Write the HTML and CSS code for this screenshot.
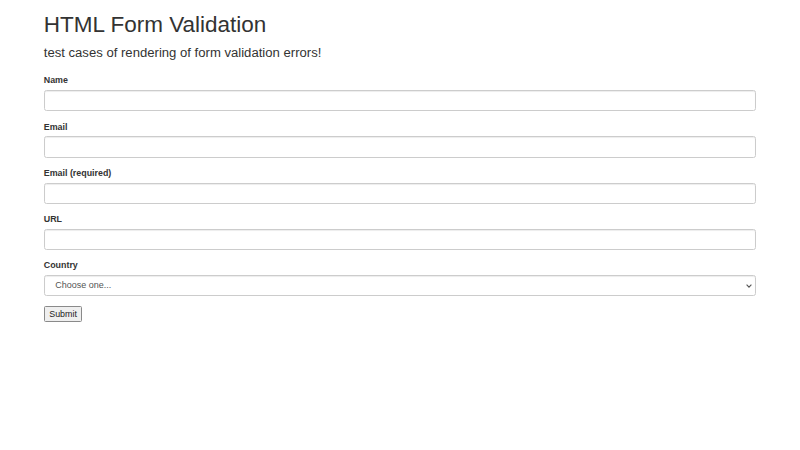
FILE: index.html
```html
<!DOCTYPE html>
<html lang="en">
<head>
<meta charset="utf-8">
<title>HTML Form Validation</title>
<link rel="stylesheet" href="styles.css">
</head>
<body>
<div class="container">
  <h1 class="title">HTML Form Validation</h1>
  <p class="lead">test cases of rendering of form validation errors!</p>
  <form class="form">
    <div class="form-group">
      <label class="label" for="name">Name</label>
      <input class="form-control" type="text" id="name">
    </div>
    <div class="form-group">
      <label class="label" for="email">Email</label>
      <input class="form-control" type="email" id="email">
    </div>
    <div class="form-group">
      <label class="label" for="email2">Email (required)</label>
      <input class="form-control" type="email" id="email2">
    </div>
    <div class="form-group">
      <label class="label" for="url">URL</label>
      <input class="form-control" type="url" id="url">
    </div>
    <div class="form-group">
      <label class="label" for="country">Country</label>
      <select class="form-control select" id="country">
        <option>Choose one...</option>
      </select>
    </div>
    <button class="submit" type="button">Submit</button>
  </form>
</div>
</body>
</html>
```
FILE: styles.css
```css
html, body {
  margin: 0;
  padding: 0;
  background: #fff;
}
body {
  font-family: "Liberation Sans", Arial, Helvetica, sans-serif;
  font-size: 8.75px;
  line-height: 12.5px;
  color: #333;
}
.container {
  width: 712.5px;
  margin: 0 auto;
}
.title {
  font-size: 22.5px;
  line-height: 24.75px;
  font-weight: 500;
  margin: 12.5px 0 6.25px;
  color: #333;
}
.lead {
  font-size: 13.125px;
  line-height: 18.375px;
  font-weight: 300;
  margin: 0 0 12.5px;
}
.form {
  margin: 0;
}
.form-group {
  margin-bottom: 9.375px;
}
.label {
  display: inline-block;
  font-weight: bold;
  font-size: 8.9px;
  margin-bottom: 3.125px;
}
.form-control {
  display: block;
  box-sizing: border-box;
  width: 100%;
  height: 21.25px;
  padding: 3.75px 7.5px;
  font-family: inherit;
  font-size: 8.75px;
  line-height: 12.5px;
  color: #555;
  background: #fff;
  border: 1px solid #ccc;
  border-radius: 2.5px;
  box-shadow: inset 0 1px 1px rgba(0, 0, 0, 0.075);
  margin: 0;
}
.select {
  appearance: none;
  -webkit-appearance: none;
  padding: 0 20px 0 10.5px;
  font-size: 9px;
  background-image: url("data:image/svg+xml,%3Csvg xmlns='http://www.w3.org/2000/svg' width='6' height='4' viewBox='0 0 6 4'%3E%3Cpath d='M0.6 0.6 L3 3.1 L5.4 0.6' fill='none' stroke='%23555' stroke-width='1.1'/%3E%3C/svg%3E");
  background-repeat: no-repeat;
  background-position: right 3.5px center;
  background-size: 6px 4px;
}
.submit {
  font-family: inherit;
  font-size: 8.9px;
  line-height: 12.5px;
  color: #222;
  background: #efefef;
  border: 1px solid #8a8a8a;
  border-radius: 1.5px;
  padding: 0.9px 4.5px;
  margin: 0;
  height: 16.25px;
  box-sizing: border-box;
}
```
